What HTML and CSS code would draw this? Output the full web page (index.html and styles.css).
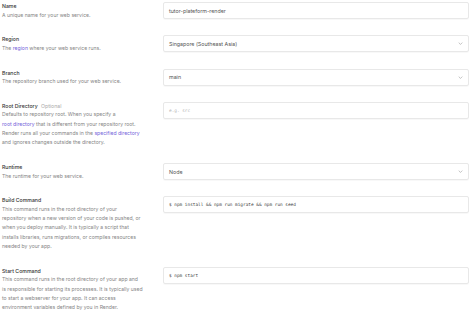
FILE: index.html
```html
<!DOCTYPE html>
<html lang="en">
<head>
  <meta charset="UTF-8" />
  <meta name="viewport" content="width=device-width, initial-scale=1" />
  <title>New Web Service</title>
  <link rel="stylesheet" href="styles.css">
</head>
<body>
  <div class="form">
    <div class="row">
      <div class="info">
        <div class="label">Name</div>
        <div class="desc">A unique name for your web service.</div>
      </div>
      <div class="field"><span class="value">tutor-plateform-render</span></div>
    </div>

    <div class="row">
      <div class="info">
        <div class="label">Region</div>
        <div class="desc">The <a href="#">region</a> where your web service runs.</div>
      </div>
      <div class="field select">
        <span class="value">Singapore (Southeast Asia)</span>
        <svg class="chev" viewBox="0 0 8 5"><path d="M1 1l3 3 3-3" /></svg>
      </div>
    </div>

    <div class="row">
      <div class="info">
        <div class="label">Branch</div>
        <div class="desc">The repository branch used for your web service.</div>
      </div>
      <div class="field select">
        <span class="value">main</span>
        <svg class="chev" viewBox="0 0 8 5"><path d="M1 1l3 3 3-3" /></svg>
      </div>
    </div>

    <div class="row">
      <div class="info">
        <div class="label">Root Directory <span class="optional">Optional</span></div>
        <div class="desc">Defaults to repository root. When you specify a<br>
          <a href="#">root directory</a> that is different from your repository root.<br>
          Render runs all your commands in the <a href="#">specified directory</a><br>
          and ignores changes outside the directory.</div>
      </div>
      <div class="field"><span class="value mono placeholder">e.g. src</span></div>
    </div>

    <div class="row">
      <div class="info">
        <div class="label">Runtime</div>
        <div class="desc">The runtime for your web service.</div>
      </div>
      <div class="field select">
        <span class="value">Node</span>
        <svg class="chev" viewBox="0 0 8 5"><path d="M1 1l3 3 3-3" /></svg>
      </div>
    </div>

    <div class="row">
      <div class="info">
        <div class="label">Build Command</div>
        <div class="desc">This command runs in the root directory of your<br>
          repository when a new version of your code is pushed, or<br>
          when you deploy manually. It is typically a script that<br>
          installs libraries, runs migrations, or compiles resources<br>
          needed by your app.</div>
      </div>
      <div class="field"><span class="value mono">$ npm install &amp;&amp; npm run migrate &amp;&amp; npm run seed</span></div>
    </div>

    <div class="row">
      <div class="info">
        <div class="label">Start Command</div>
        <div class="desc">This command runs in the root directory of your app and<br>
          is responsible for starting its processes. It is typically used<br>
          to start a webserver for your app. It can access<br>
          environment variables defined by you in Render.</div>
      </div>
      <div class="field"><span class="value mono">$ npm start</span></div>
    </div>
  </div>
</body>
</html>
```

FILE: styles.css
```css
body {
  margin: 0;
  background: #fff;
  font-family: Inter, "Noto Sans", sans-serif;
  color: #333;
}
.form {
  padding: 2px 5px 0 2px;
  display: flex;
  flex-direction: column;
  gap: 15.5px;
}
.row {
  display: grid;
  grid-template-columns: 148px 306px;
  column-gap: 13px;
  align-items: start;
}
.label {
  font-size: 5.2px;
  line-height: 8.5px;
  font-weight: 500;
  color: #333;
}
.optional {
  font-weight: 400;
  color: #aaa;
  margin-left: 2px;
}
.desc {
  font-size: 5.1px;
  line-height: 9.3px;
  color: #858585;
  white-space: nowrap;
}
.desc a {
  color: #7262d9;
  text-decoration: none;
}
.field {
  height: 17px;
  box-sizing: border-box;
  border: 1px solid #e8e8e8;
  border-radius: 2px;
  box-shadow: 0 1px 1px rgba(0, 0, 0, 0.03);
  display: flex;
  align-items: center;
  justify-content: space-between;
  padding: 0 5px 0 5px;
}
.value {
  font-size: 5.3px;
  color: #555;
}
.mono {
  font-family: "DejaVu Sans Mono", "Liberation Mono", monospace;
  font-size: 4.4px;
  color: #444;
}
.placeholder {
  color: #b5b5b5;
}
.chev {
  width: 5px;
  height: 3px;
  fill: none;
  stroke: #9a9a9a;
  stroke-width: 1;
}
```
